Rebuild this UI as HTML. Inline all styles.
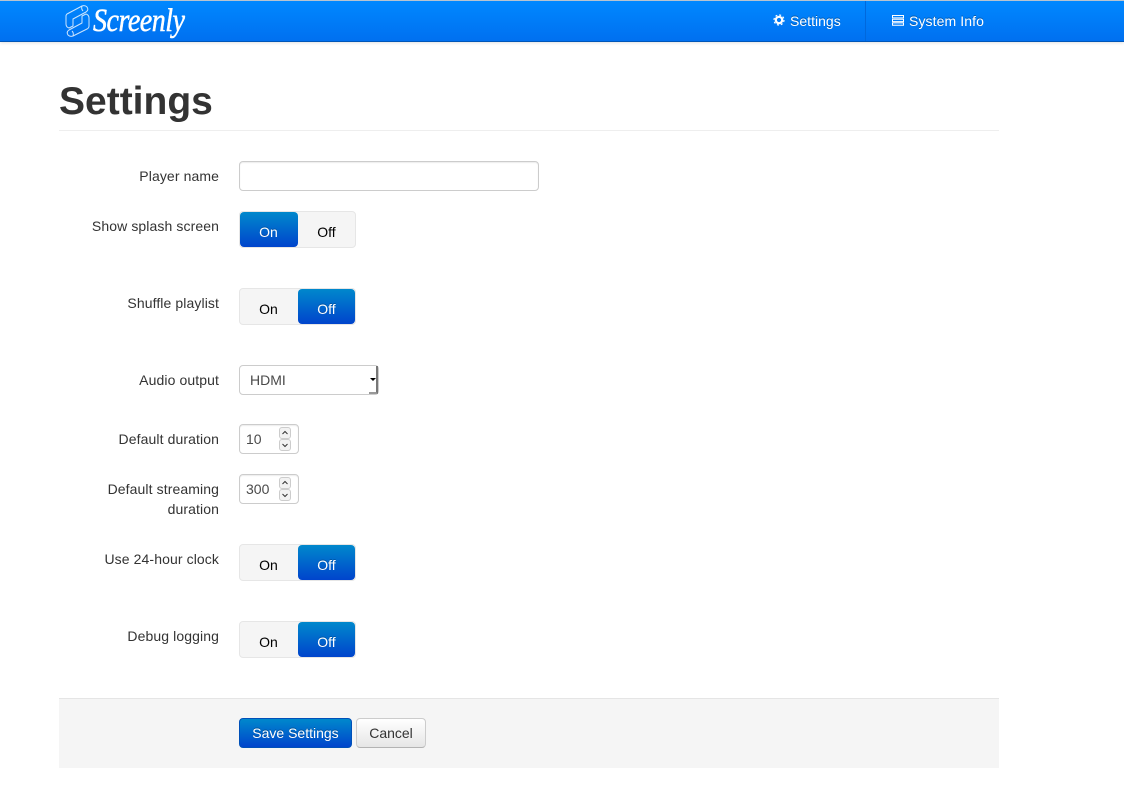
<!DOCTYPE html>
<html><head><meta charset="utf-8"><title>Settings</title>
<style>
*{box-sizing:border-box}
html,body{margin:0;padding:0;width:1124px;height:788px;overflow:hidden;background:#fff;font-family:"Liberation Sans",sans-serif;font-size:14px;color:#333}
.a{position:absolute}
#nav{left:0;top:0;width:1124px;height:42px;background:linear-gradient(#0088ff,#0070f0);border-top:1px solid #b8c4d0;border-bottom:1px solid #0056b8;box-shadow:0 1px 3px rgba(0,0,0,.12)}
.nl{color:#fff;font-size:14px;line-height:20px;text-shadow:0 -1px 0 rgba(0,0,0,.3)}
#h1{left:59px;top:78px;font-size:39px;font-weight:bold;line-height:48px;color:#333}
#hr{left:59px;top:130px;width:940px;height:1px;background:#eee}
.l{left:59px;width:160px;text-align:right;line-height:20px;color:#333;letter-spacing:.1px}
.in{border:1px solid #ccc;border-radius:4px;background:#fff;box-shadow:inset 0 1px 1px rgba(0,0,0,.075);color:#4a4a4a}
.tg{left:239px;width:117px;height:37px;background:#f5f5f5;border:1px solid #e6e6e6;border-radius:4px;color:#000;font-size:14px}
.tg span{position:absolute;top:0;height:35px;line-height:40px;text-align:center}
.tg .x{left:0;width:57px}
.tg .y{left:58px;width:57px}
.tg .on{background:linear-gradient(#0088cc,#0044cc);color:#fff;border-radius:4px;text-shadow:0 -1px 0 rgba(0,0,0,.2)}
.tg .x.on{width:58px;padding-right:1px}
.s{left:279px;width:12px;height:12px;border:1px solid #ccc;border-radius:3px;background:#f2f2f2}
.s svg{position:absolute;left:1px;top:1px}
#act{left:59px;top:698px;width:940px;height:70px;background:#f5f5f5;border-top:1px solid #e5e5e5}
.b{height:30px;border-radius:4px;line-height:28px;text-align:center;font-size:14px}
</style></head><body>
<div id="nav" class="a"></div>
<svg class="a" style="left:64px;top:3px" width="28" height="34" viewBox="0 0 28 34" fill="none" stroke="#fff" stroke-width="1" stroke-linejoin="round" opacity=".8">
<path d="M3 11 L18 3 Q21 2 23 4 Q25 7 22 9 L9 16 L9 23 L5 25 Q2 24 2 21 L2 13 Q2 12 3 11 Z"/>
<path d="M23 26 L9 33 Q6 34 4 32 Q2 29 5 27 L18 20 L18 13 L22 11 Q25 12 25 15 L25 23 Q25 25 23 26 Z"/>
<path d="M18 3 Q17 6 19 8 M9 33 Q10 30 8 28"/>
</svg>
<div class="a" style="left:93px;top:2px;font-family:'Liberation Serif',serif;font-style:italic;font-size:33px;line-height:38px;color:#fff;letter-spacing:-.6px;transform:scaleX(.85);transform-origin:left;-webkit-text-stroke:.5px #fff">Screenly</div>
<div class="a" style="left:865px;top:1px;width:1px;height:40px;background:#0068dc"></div>
<svg class="a" style="left:773px;top:14px" width="12" height="12" viewBox="0 0 12 12"><circle cx="6" cy="6" r="3.2" fill="none" stroke="#fff" stroke-width="2.2"/><circle cx="6" cy="6" r="5" fill="none" stroke="#fff" stroke-width="1.2" stroke-dasharray="2 1.93"/></svg>
<div class="a nl" style="left:790px;top:11px;letter-spacing:.02px">Settings</div>
<svg class="a" style="left:892px;top:15px" width="12" height="11" viewBox="0 0 12 11"><path d="M.5.5h11v2.4H.5zM.5 4.2h11v2.4H.5zM.5 7.9h11v2.4H.5z" fill="none" stroke="#fff"/></svg>
<div class="a nl" style="left:909px;top:11px;letter-spacing:.1px">System Info</div>

<div id="h1" class="a">Settings</div>
<div id="hr" class="a"></div>

<div class="a l" style="top:166px">Player name</div>
<div class="a in" style="left:239px;top:161px;width:300px;height:30px"></div>

<div class="a l" style="top:216px">Show splash screen</div>
<div class="a tg" style="top:211px"><span class="x on">On</span><span class="y">Off</span></div>

<div class="a l" style="top:293px">Shuffle playlist</div>
<div class="a tg" style="top:288px"><span class="x">On</span><span class="y on">Off</span></div>

<div class="a l" style="top:370px">Audio output</div>
<div class="a in" style="left:239px;top:365px;width:140px;height:30px;line-height:28px;padding-left:10px;box-shadow:none">HDMI</div>
<div class="a" style="left:369px;top:366px;width:9px;height:28px;background:#fff;border-right:2px solid #777;border-bottom:2px solid #999"></div>
<div class="a" style="left:370px;top:378px;width:0;height:0;border-left:3px solid transparent;border-right:3px solid transparent;border-top:3px solid #000"></div>

<div class="a l" style="top:429px">Default duration</div>
<div class="a in" style="left:239px;top:424px;width:60px;height:30px;line-height:28px;padding-left:6px">10</div>
<div class="a s" style="top:427px"><svg width="8" height="8" viewBox="0 0 8 8"><path d="M1.5 5L4 2.5 6.5 5" fill="none" stroke="#333"/></svg></div>
<div class="a s" style="top:439px"><svg width="8" height="8" viewBox="0 0 8 8"><path d="M1.5 3L4 5.5 6.5 3" fill="none" stroke="#333"/></svg></div>

<div class="a l" style="top:479px">Default streaming<br>duration</div>
<div class="a in" style="left:239px;top:474px;width:60px;height:30px;line-height:28px;padding-left:6px">300</div>
<div class="a s" style="top:477px"><svg width="8" height="8" viewBox="0 0 8 8"><path d="M1.5 5L4 2.5 6.5 5" fill="none" stroke="#333"/></svg></div>
<div class="a s" style="top:489px"><svg width="8" height="8" viewBox="0 0 8 8"><path d="M1.5 3L4 5.5 6.5 3" fill="none" stroke="#333"/></svg></div>

<div class="a l" style="top:549px">Use 24-hour clock</div>
<div class="a tg" style="top:544px"><span class="x">On</span><span class="y on">Off</span></div>

<div class="a l" style="top:626px">Debug logging</div>
<div class="a tg" style="top:621px"><span class="x">On</span><span class="y on">Off</span></div>

<div id="act" class="a"></div>
<div class="a b" style="left:239px;top:718px;width:113px;color:#fff;background:linear-gradient(#0088cc,#0044cc);border:1px solid #0050b8;text-shadow:0 -1px 0 rgba(0,0,0,.25)">Save Settings</div>
<div class="a b" style="left:356px;top:718px;width:70px;color:#333;background:linear-gradient(#fff,#e6e6e6);border:1px solid #ccc;border-bottom-color:#b3b3b3">Cancel</div>
</body></html>
